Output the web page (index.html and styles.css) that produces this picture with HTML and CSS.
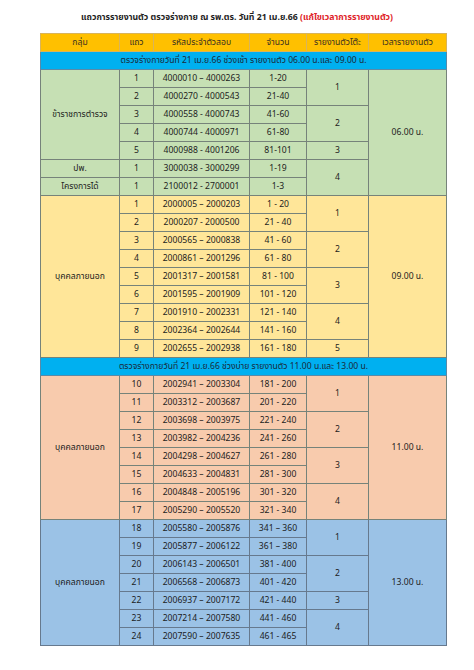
FILE: index.html
```html
<!DOCTYPE html>
<html lang="th">
<head>
<meta charset="utf-8">
<title>แถวการรายงานตัว</title>
<link rel="stylesheet" href="styles.css">
</head>
<body>
<div class="page">
  <h1 class="title">แถวการรายงานตัว ตรวจร่างกาย ณ รพ.ตร. วันที่ 21 เม.ย.66 <span class="red">(แก้ไขเวลาการรายงานตัว)</span></h1>
  <table class="sched">
    <colgroup>
      <col class="c1"><col class="c2"><col class="c3"><col class="c4"><col class="c5"><col class="c6">
    </colgroup>
    <thead>
      <tr class="head"><th>กลุ่ม</th><th>แถว</th><th>รหัสประจำตัวสอบ</th><th>จำนวน</th><th>รายงานตัวโต๊ะ</th><th>เวลารายงานตัว</th></tr>
    </thead>
    <tbody>
      <tr class="sec"><td colspan="6">ตรวจร่างกายวันที่ 21 เม.ย.66 ช่วงเช้า รายงานตัว 06.00 น.และ 09.00 น.</td></tr>
    </tbody>
    <tbody class="green">
      <tr><td rowspan="5">ข้าราชการตำรวจ</td><td>1</td><td>4000010 – 4000263</td><td>1-20</td><td rowspan="2">1</td><td rowspan="7">06.00 น.</td></tr>
      <tr><td>2</td><td>4000270 - 4000543</td><td>21-40</td></tr>
      <tr><td>3</td><td>4000558 - 4000743</td><td>41-60</td><td rowspan="2">2</td></tr>
      <tr><td>4</td><td>4000744 - 4000971</td><td>61-80</td></tr>
      <tr><td>5</td><td>4000988 - 4001206</td><td>81-101</td><td>3</td></tr>
      <tr><td>ปพ.</td><td>1</td><td>3000038 - 3000299</td><td>1-19</td><td rowspan="2">4</td></tr>
      <tr><td>โครงการได้</td><td>1</td><td>2100012 - 2700001</td><td>1-3</td></tr>
    </tbody>
    <tbody class="yellow">
      <tr><td rowspan="9">บุคคลภายนอก</td><td>1</td><td>2000005 – 2000203</td><td>1 - 20</td><td rowspan="2">1</td><td rowspan="9">09.00 น.</td></tr>
      <tr><td>2</td><td>2000207 - 2000500</td><td>21 - 40</td></tr>
      <tr><td>3</td><td>2000565 – 2000838</td><td>41 - 60</td><td rowspan="2">2</td></tr>
      <tr><td>4</td><td>2000861 – 2001296</td><td>61 - 80</td></tr>
      <tr><td>5</td><td>2001317 – 2001581</td><td>81 - 100</td><td rowspan="2">3</td></tr>
      <tr><td>6</td><td>2001595 – 2001909</td><td>101 - 120</td></tr>
      <tr><td>7</td><td>2001910 – 2002331</td><td>121 - 140</td><td rowspan="2">4</td></tr>
      <tr><td>8</td><td>2002364 – 2002644</td><td>141 - 160</td></tr>
      <tr><td>9</td><td>2002655 – 2002938</td><td>161 - 180</td><td>5</td></tr>
    </tbody>
    <tbody>
      <tr class="sec"><td colspan="6">ตรวจร่างกายวันที่ 21 เม.ย.66 ช่วงบ่าย รายงานตัว 11.00 น.และ 13.00 น.</td></tr>
    </tbody>
    <tbody class="salmon">
      <tr><td rowspan="8">บุคคลภายนอก</td><td>10</td><td>2002941 – 2003304</td><td>181 - 200</td><td rowspan="2">1</td><td rowspan="8">11.00 น.</td></tr>
      <tr><td>11</td><td>2003312 – 2003687</td><td>201 - 220</td></tr>
      <tr><td>12</td><td>2003698 – 2003975</td><td>221 - 240</td><td rowspan="2">2</td></tr>
      <tr><td>13</td><td>2003982 – 2004236</td><td>241 - 260</td></tr>
      <tr><td>14</td><td>2004298 – 2004627</td><td>261 - 280</td><td rowspan="2">3</td></tr>
      <tr><td>15</td><td>2004633 – 2004831</td><td>281 - 300</td></tr>
      <tr><td>16</td><td>2004848 – 2005196</td><td>301 - 320</td><td rowspan="2">4</td></tr>
      <tr><td>17</td><td>2005290 – 2005520</td><td>321 - 340</td></tr>
    </tbody>
    <tbody class="blue">
      <tr><td rowspan="7">บุคคลภายนอก</td><td>18</td><td>2005580 – 2005876</td><td>341 – 360</td><td rowspan="2">1</td><td rowspan="7">13.00 น.</td></tr>
      <tr><td>19</td><td>2005877 – 2006122</td><td>361 – 380</td></tr>
      <tr><td>20</td><td>2006143 – 2006501</td><td>381 - 400</td><td rowspan="2">2</td></tr>
      <tr><td>21</td><td>2006568 – 2006873</td><td>401 - 420</td></tr>
      <tr><td>22</td><td>2006937 – 2007172</td><td>421 - 440</td><td>3</td></tr>
      <tr><td>23</td><td>2007214 – 2007580</td><td>441 - 460</td><td rowspan="2">4</td></tr>
      <tr><td>24</td><td>2007590 – 2007635</td><td>461 - 465</td></tr>
    </tbody>
  </table>
</div>
</body>
</html>
```

FILE: styles.css
```css
html, body {
  margin: 0;
  padding: 0;
  background: #ffffff;
}

.page {
  width: 474px;
  height: 670px;
  padding-top: 11px;
  box-sizing: border-box;
  font-family: Tahoma, "Noto Sans Thai", "Noto Sans", "DejaVu Sans", sans-serif;
  color: #1c1c1c;
}

.title {
  margin: 0 0 8px 0;
  text-align: center;
  font-size: 8.7px;
  line-height: 14px;
  font-weight: bold;
  color: #1e1e1e;
}

.red {
  color: #e0242a;
}

.sched {
  margin-left: 40px;
  width: 406px;
  border-collapse: collapse;
  table-layout: fixed;
  font-size: 8.6px;
}

.c1 { width: 79px; }
.c2 { width: 34px; }
.c3 { width: 96px; }
.c4 { width: 57px; }
.c5 { width: 62px; }
.c6 { width: 78px; }

.sched th,
.sched td {
  padding: 0;
  height: 17px;
  line-height: 12px;
  text-align: center;
  vertical-align: middle;
  border: 1px solid #76837a;
  white-space: nowrap;
  overflow: hidden;
}

.head th {
  background: #ffc000;
  font-weight: normal;
  color: #3a3020;
  border-color: #d9b45a;
}

.sec td {
  background: #00b0f0;
  color: #1a2a3a;
  border-color: #5a8aa8;
}

.green td { background: #c6e0b4; }
.yellow td { background: #ffe699; }
.salmon td { background: #f8cbad; }
.blue td { background: #9bc2e6; border-color: #66798e; }
```
